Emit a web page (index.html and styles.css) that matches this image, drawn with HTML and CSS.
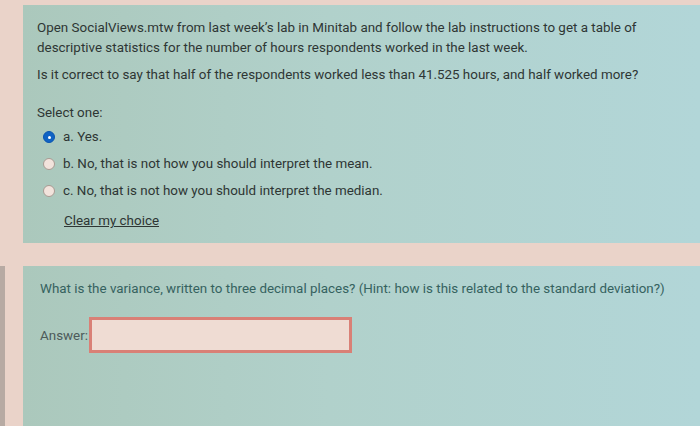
FILE: index.html
```html
<!DOCTYPE html>
<html>
<head>
<meta charset="utf-8">
<link rel="stylesheet" href="styles.css">
</head>
<body>
<div class="page">
  <div class="row">
    <div class="margin"></div>
    <div class="que que1">
      <p class="qtext">Open SocialViews.mtw from last week’s lab in Minitab and follow the lab instructions to get a table of descriptive statistics for the number of hours respondents worked in the last week.</p>
      <p class="qtext q2">Is it correct to say that half of the respondents worked less than 41.525 hours, and half worked more?</p>
      <div class="prompt">Select one:</div>
      <div class="answers">
        <div class="opt"><span class="radio checked"></span><span>a. Yes.</span></div>
        <div class="opt"><span class="radio"></span><span>b. No, that is not how you should interpret the mean.</span></div>
        <div class="opt"><span class="radio"></span><span>c. No, that is not how you should interpret the median.</span></div>
      </div>
      <a class="clear">Clear my choice</a>
    </div>
  </div>
  <div class="row row2">
    <div class="margin m2"><div class="strip"></div></div>
    <div class="que que2">
      <p class="qtext2">What is the variance, written to three decimal places? (Hint: how is this related to the standard deviation?)</p>
      <div class="ablock">
        <label class="alabel">Answer:</label>
        <div class="input"></div>
      </div>
    </div>
  </div>
</div>
</body>
</html>
```
FILE: styles.css
```css
html, body {
  margin: 0;
  padding: 0;
  height: 426px;
  overflow: hidden;
  background: #ead3c9;
  font-family: Roboto, "Liberation Sans", sans-serif;
}
.page {
  display: flex;
  flex-direction: column;
  gap: 23px;
  padding-top: 5px;
  height: 421px;
}
.row {
  display: flex;
}
.row2 {
  flex: 1;
}
.margin {
  width: 23px;
  flex: none;
}
.m2 {
  display: flex;
}
.strip {
  width: 5px;
  background: #b7aaa3;
}
.que {
  flex: 1;
  background: linear-gradient(90deg, #abc8bc 0%, #b1d1cb 45%, #b2d6d8 100%);
}
.que1 {
  padding: 13px 0 12px 14px;
  height: 213px;
  color: #2e3634;
  font-size: 13.4px;
}
.qtext {
  margin: 0;
  line-height: 20px;
  width: 640px;
}
.q2 {
  margin-top: 7px;
}
.prompt {
  margin-top: 18px;
  line-height: 20px;
}
.answers {
  margin-top: 4px;
  display: flex;
  flex-direction: column;
  gap: 7px;
}
.opt {
  display: flex;
  align-items: center;
  gap: 8px;
  line-height: 20px;
  padding-left: 6px;
}
.radio {
  width: 10px;
  height: 10px;
  border-radius: 50%;
  border: 1px solid #a89a92;
  background: #f2e3dc;
  flex: none;
}
.radio.checked {
  background: #1063c4;
  border-color: #0b55b0;
  position: relative;
}
.radio.checked::after {
  content: "";
  position: absolute;
  left: 3.5px;
  top: 3.5px;
  width: 3px;
  height: 3px;
  border-radius: 50%;
  background: #fff;
}
.clear {
  display: inline-block;
  margin-top: 10px;
  margin-left: 27px;
  text-decoration: underline;
  color: #2e3634;
  line-height: 20px;
}
.que2 {
  padding: 13px 0 0 17px;
  font-size: 13.4px;
}
.qtext2 {
  margin: 0;
  color: #35625f;
  line-height: 20px;
}
.ablock {
  display: flex;
  align-items: center;
  margin-top: 18px;
  gap: 1px;
}
.alabel {
  color: #4d5a5a;
}
.input {
  width: 257px;
  height: 30px;
  border: 3px solid #d98076;
  background: #efdcd3;
}
```
